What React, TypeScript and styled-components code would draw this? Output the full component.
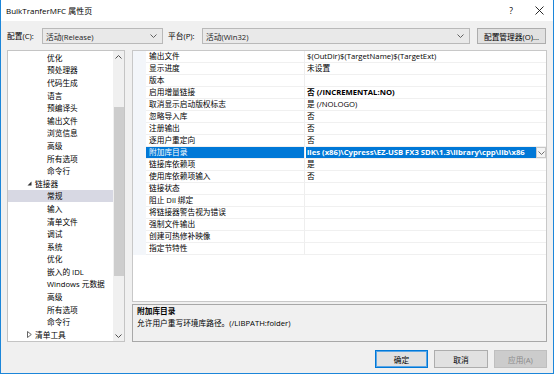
import React from "react";
import styled, { createGlobalStyle } from "styled-components";

const GlobalStyle = createGlobalStyle`
  html, body { margin: 0; padding: 0; background: #ffffff; }
  body {
    font-family: "Open Sans", "Noto Sans CJK SC", sans-serif;
    font-size: 7.7px;
    color: #000;
  }
  * { box-sizing: border-box; }
`;

const Window = styled.div`
  width: 554px;
  height: 374px;
  display: flex;
  flex-direction: column;
  background: #f0f0f0;
  border: 1px solid #1c86d9;
  border-top: none;
  overflow: hidden;
`;

const TitleBar = styled.div`
  height: 21px;
  flex: none;
  display: flex;
  align-items: center;
  background: #ffffff;
  padding-left: 5px;
  font-size: 8px;
`;

const TitleText = styled.div`
  flex: 1;
  white-space: nowrap;
`;

const CaptionButton = styled.div`
  width: 28px;
  height: 21px;
  display: flex;
  align-items: center;
  justify-content: center;
  font-size: 8.5px;
  color: #000;
`;

const Body = styled.div`
  flex: 1;
  display: flex;
  flex-direction: column;
  padding: 7px 6px 5px 6px;
`;

const ConfigRow = styled.div`
  height: 16px;
  display: flex;
  align-items: center;
  flex: none;
`;

const Label = styled.div<{ $w: number; $pl?: number }>`
  width: ${(p) => p.$w}px;
  padding-left: ${(p) => p.$pl ?? 0}px;
  white-space: nowrap;
  line-height: 16px;
`;

const Combo = styled.div<{ $w: number }>`
  width: ${(p) => p.$w}px;
  height: 16px;
  display: flex;
  align-items: center;
  background: #e9e9e9;
  border: 1px solid #b9b9b9;
  padding: 0 5px 0 3px;
  color: #222;
`;

const ComboText = styled.div`
  flex: 1;
  white-space: nowrap;
`;

const PushButton = styled.div<{ $w: number; $ml?: number; $h?: number; $variant?: "default" | "disabled" | "normal" }>`
  width: ${(p) => p.$w}px;
  height: ${(p) => p.$h ?? 18}px;
  margin-left: ${(p) => p.$ml ?? 0}px;
  display: flex;
  align-items: center;
  justify-content: center;
  white-space: nowrap;
  background: ${(p) => (p.$variant === "disabled" ? "#cccccc" : "#e1e1e1")};
  border: 1px solid
    ${(p) => (p.$variant === "default" ? "#0078d7" : p.$variant === "disabled" ? "#bfbfbf" : "#adadad")};
  box-shadow: ${(p) => (p.$variant === "default" ? "inset 0 0 0 1px #5aa6e6" : "none")};
  color: ${(p) => (p.$variant === "disabled" ? "#8a8a8a" : "#000")};
`;

const Main = styled.div`
  margin-top: 6px;
  height: 292px;
  flex: none;
  display: flex;
  gap: 7px;
`;

const Tree = styled.div`
  width: 118px;
  height: 100%;
  display: flex;
  background: #ffffff;
  border: 1px solid #c4c4c4;
`;

const TreeList = styled.div`
  flex: 1;
  display: flex;
  flex-direction: column;
  overflow: hidden;
`;

const TreeRow = styled.div<{ $level: number; $selected?: boolean }>`
  height: 12.6px;
  flex: none;
  display: flex;
  align-items: center;
  padding-left: ${(p) => (p.$level === 0 ? 19 : 39)}px;
  background: ${(p) => (p.$selected ? "#d7d8e3" : "transparent")};
  white-space: nowrap;
`;

const Expander = styled.span`
  width: 8px;
  height: 8px;
  display: flex;
  align-items: center;
  justify-content: flex-start;
`;

const Scrollbar = styled.div`
  width: 11px;
  height: 100%;
  display: flex;
  flex-direction: column;
  background: #f0f0f0;
`;

const ScrollArrow = styled.div`
  height: 11px;
  flex: none;
  display: flex;
  align-items: center;
  justify-content: center;
`;

const ScrollTrack = styled.div`
  flex: 1;
  display: flex;
  flex-direction: column;
  align-items: center;
`;

const Thumb = styled.div`
  width: 10px;
  height: 169px;
  margin-top: 45px;
  background: #cdcdcd;
`;

const RightCol = styled.div`
  width: 415px;
  display: flex;
  flex-direction: column;
  gap: 2px;
`;

const Grid = styled.div`
  height: 252px;
  flex: none;
  background: #ffffff;
  border: 1px solid #c8c8c8;
  display: flex;
  flex-direction: column;
`;

const GridRow = styled.div`
  height: 12px;
  flex: none;
  display: flex;
`;

const Gutter = styled.div`
  width: 13px;
  background: #f3f6fa;
`;

const NameCell = styled.div<{ $selected?: boolean }>`
  width: 159px;
  padding-left: 3px;
  line-height: 11px;
  white-space: nowrap;
  overflow: hidden;
  border-bottom: 1px solid #f0f0f0;
  border-right: 1px solid #eeeeee;
  background: ${(p) => (p.$selected ? "#0078d7" : "transparent")};
  color: ${(p) => (p.$selected ? "#ffffff" : "#000")};
`;

const ValueCell = styled.div<{ $bold?: boolean }>`
  flex: 1;
  display: flex;
  padding-left: 1px;
  line-height: 11px;
  white-space: nowrap;
  overflow: hidden;
  border-bottom: 1px solid #f0f0f0;
  font-weight: ${(p) => (p.$bold ? 700 : 400)};
`;

const ValueText = styled.div<{ $selected?: boolean }>`
  flex: 1;
  padding-left: 1px;
  overflow: hidden;
  white-space: nowrap;
  background: ${(p) => (p.$selected ? "#0078d7" : "transparent")};
  color: ${(p) => (p.$selected ? "#ffffff" : "#000")};
`;

const DropButton = styled.div`
  width: 10px;
  display: flex;
  align-items: center;
  justify-content: center;
  background: #f4f4f4;
  border: 1px solid #c8c8c8;
`;

const Description = styled.div`
  flex: 1;
  background: #f0f0f0;
  border: 1px solid #a8a8a8;
  padding: 0 4px;
  display: flex;
  flex-direction: column;
`;

const DescTitle = styled.div`
  line-height: 12px;
  font-weight: 700;
`;

const DescText = styled.div`
  line-height: 12px;
`;

const ButtonRow = styled.div`
  margin-top: 8px;
  height: 18px;
  flex: none;
  display: flex;
  justify-content: flex-end;
  gap: 6px;
`;

const Chevron = ({ up = false, color = "#606060" }: { up?: boolean; color?: string }) => (
  <svg width="7" height="4" viewBox="0 0 7 4">
    <polyline
      points={up ? "0.5,3.5 3.5,0.5 6.5,3.5" : "0.5,0.5 3.5,3.5 6.5,0.5"}
      fill="none"
      stroke={color}
      strokeWidth="1"
    />
  </svg>
);

const treeItems: { text: string; level: number; kind?: "open" | "closed"; selected?: boolean }[] = [
  { text: "优化", level: 1 },
  { text: "预处理器", level: 1 },
  { text: "代码生成", level: 1 },
  { text: "语言", level: 1 },
  { text: "预编译头", level: 1 },
  { text: "输出文件", level: 1 },
  { text: "浏览信息", level: 1 },
  { text: "高级", level: 1 },
  { text: "所有选项", level: 1 },
  { text: "命令行", level: 1 },
  { text: "链接器", level: 0, kind: "open" },
  { text: "常规", level: 1, selected: true },
  { text: "输入", level: 1 },
  { text: "清单文件", level: 1 },
  { text: "调试", level: 1 },
  { text: "系统", level: 1 },
  { text: "优化", level: 1 },
  { text: "嵌入的 IDL", level: 1 },
  { text: "Windows 元数据", level: 1 },
  { text: "高级", level: 1 },
  { text: "所有选项", level: 1 },
  { text: "命令行", level: 1 },
  { text: "清单工具", level: 0, kind: "closed" },
];

const props: { name: string; value: string; bold?: boolean; selected?: boolean }[] = [
  { name: "输出文件", value: "$(OutDir)$(TargetName)$(TargetExt)" },
  { name: "显示进度", value: "未设置" },
  { name: "版本", value: "" },
  { name: "启用增量链接", value: "否 (/INCREMENTAL:NO)", bold: true },
  { name: "取消显示启动版权标志", value: "是 (/NOLOGO)" },
  { name: "忽略导入库", value: "否" },
  { name: "注册输出", value: "否" },
  { name: "逐用户重定向", value: "否" },
  {
    name: "附加库目录",
    value: "iles (x86)\\Cypress\\EZ-USB FX3 SDK\\1.3\\library\\cpp\\lib\\x86",
    bold: true,
    selected: true,
  },
  { name: "链接库依赖项", value: "是" },
  { name: "使用库依赖项输入", value: "否" },
  { name: "链接状态", value: "" },
  { name: "阻止 Dll 绑定", value: "" },
  { name: "将链接器警告视为错误", value: "" },
  { name: "强制文件输出", value: "" },
  { name: "创建可热修补映像", value: "" },
  { name: "指定节特性", value: "" },
];

export default function App() {
  return (
    <>
      <GlobalStyle />
      <Window>
        <TitleBar>
          <TitleText>BulkTranferMFC 属性页</TitleText>
          <CaptionButton>?</CaptionButton>
          <CaptionButton>
            <svg width="9" height="9" viewBox="0 0 9 9">
              <path d="M0.5 0.5 L8.5 8.5 M8.5 0.5 L0.5 8.5" stroke="#111" strokeWidth="0.9" fill="none" />
            </svg>
          </CaptionButton>
        </TitleBar>
        <Body>
          <ConfigRow>
            <Label $w={35}>配置(C):</Label>
            <Combo $w={121}>
              <ComboText>活动(Release)</ComboText>
              <Chevron />
            </Combo>
            <Label $w={39} $pl={5}>
              平台(P):
            </Label>
            <Combo $w={268}>
              <ComboText>活动(Win32)</ComboText>
              <Chevron />
            </Combo>
            <PushButton $w={69} $ml={7} $h={16} $variant="normal">
              配置管理器(O)...
            </PushButton>
          </ConfigRow>
          <Main>
            <Tree>
              <TreeList>
                {treeItems.map((it, i) => (
                  <TreeRow key={i} $level={it.level} $selected={it.selected}>
                    {it.level === 0 && (
                      <Expander>
                        {it.kind === "open" ? (
                          <svg width="5" height="5" viewBox="0 0 5 5">
                            <polygon points="4.5,0.5 4.5,4.5 0.5,4.5" fill="#333" />
                          </svg>
                        ) : (
                          <svg width="5" height="7" viewBox="0 0 5 7">
                            <polygon points="0.5,0.5 4.3,3.5 0.5,6.5" fill="none" stroke="#555" strokeWidth="0.9" />
                          </svg>
                        )}
                      </Expander>
                    )}
                    {it.text}
                  </TreeRow>
                ))}
              </TreeList>
              <Scrollbar>
                <ScrollArrow>
                  <Chevron up color="#505050" />
                </ScrollArrow>
                <ScrollTrack>
                  <Thumb />
                </ScrollTrack>
                <ScrollArrow>
                  <Chevron color="#505050" />
                </ScrollArrow>
              </Scrollbar>
            </Tree>
            <RightCol>
              <Grid>
                {props.map((p, i) => (
                  <GridRow key={i}>
                    <Gutter />
                    <NameCell $selected={p.selected}>{p.name}</NameCell>
                    <ValueCell $bold={p.bold}>
                      <ValueText $selected={p.selected}>{p.value}</ValueText>
                      {p.selected && (
                        <DropButton>
                          <Chevron color="#707070" />
                        </DropButton>
                      )}
                    </ValueCell>
                  </GridRow>
                ))}
              </Grid>
              <Description>
                <DescTitle>附加库目录</DescTitle>
                <DescText>允许用户重写环境库路径。(/LIBPATH:folder)</DescText>
              </Description>
            </RightCol>
          </Main>
          <ButtonRow>
            <PushButton $w={53} $variant="default">
              确定
            </PushButton>
            <PushButton $w={54} $variant="normal">
              取消
            </PushButton>
            <PushButton $w={53} $variant="disabled">
              应用(A)
            </PushButton>
          </ButtonRow>
        </Body>
      </Window>
    </>
  );
}
